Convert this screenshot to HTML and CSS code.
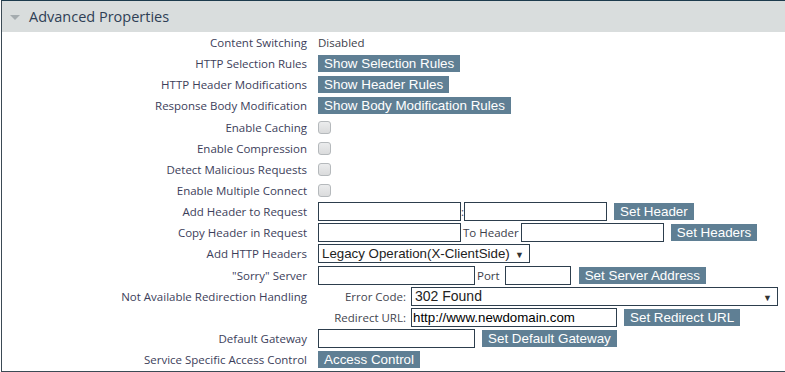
FILE: index.html
```html
<!DOCTYPE html>
<html lang="en">
<head>
    <meta charset="UTF-8">
    <meta name="viewport" content="width=device-width, initial-scale=1.0">
    <title>Advanced Properties</title>
    <link rel="stylesheet" href="styles.css">
</head>
<body>
    <div class="panel">
        <div class="panel-head">
            <span class="caret"></span>
            <span class="panel-title">Advanced Properties</span>
        </div>
        <div class="props">
            <div class="label">Content Switching</div>
            <div class="value"><span class="plain">Disabled</span></div>

            <div class="label">HTTP Selection Rules</div>
            <div class="value"><button class="btn">Show Selection Rules</button></div>

            <div class="label">HTTP Header Modifications</div>
            <div class="value"><button class="btn">Show Header Rules</button></div>

            <div class="label">Response Body Modification</div>
            <div class="value"><button class="btn">Show Body Modification Rules</button></div>

            <div class="label">Enable Caching</div>
            <div class="value"><input type="checkbox" class="check"></div>

            <div class="label">Enable Compression</div>
            <div class="value"><input type="checkbox" class="check"></div>

            <div class="label">Detect Malicious Requests</div>
            <div class="value"><input type="checkbox" class="check"></div>

            <div class="label">Enable Multiple Connect</div>
            <div class="value"><input type="checkbox" class="check"></div>

            <div class="label">Add Header to Request</div>
            <div class="value">
                <input type="text" class="field w143">
                <span class="colon">:</span>
                <input type="text" class="field w143">
                <button class="btn gap7">Set Header</button>
            </div>

            <div class="label">Copy Header in Request</div>
            <div class="value">
                <input type="text" class="field w143">
                <span class="plain mid">To Header</span>
                <input type="text" class="field w143">
                <button class="btn gap7">Set Headers</button>
            </div>

            <div class="label">Add HTTP Headers</div>
            <div class="value">
                <span class="select-wrap w212">
                    <select class="select">
                        <option>Legacy Operation(X-ClientSide)</option>
                    </select>
                </span>
            </div>

            <div class="label">"Sorry" Server</div>
            <div class="value">
                <input type="text" class="field w157">
                <span class="plain port">Port</span>
                <input type="text" class="field w66">
                <button class="btn gap8">Set Server Address</button>
            </div>

            <div class="label">Not Available Redirection Handling</div>
            <div class="value span2">
                <div class="sub">
                    <div class="sub-label">Error Code:</div>
                    <div class="value">
                        <span class="select-wrap w367">
                            <select class="select big">
                                <option>302 Found</option>
                            </select>
                        </span>
                    </div>
                    <div class="sub-label">Redirect URL:</div>
                    <div class="value">
                        <input type="text" class="field w206" value="http://www.newdomain.com">
                        <button class="btn gap7">Set Redirect URL</button>
                    </div>
                </div>
            </div>
            <div class="label"></div>

            <div class="label">Default Gateway</div>
            <div class="value">
                <input type="text" class="field w157">
                <button class="btn gap7">Set Default Gateway</button>
            </div>

            <div class="label">Service Specific Access Control</div>
            <div class="value"><button class="btn">Access Control</button></div>
        </div>
    </div>
</body>
</html>
```

FILE: styles.css
```css
html, body {
    margin: 0;
    background: #ffffff;
    overflow: hidden;
}
body {
    font-family: 'Open Sans', 'Noto Sans', sans-serif;
    font-size: 11.5px;
    color: #3c3e5a;
}
.panel {
    margin-left: 1px;
    width: 800px;
    border-top: 1px solid #1d3b4d;
    border-left: 1px solid #3b4a55;
    border-bottom: 1px solid #3b4a55;
    padding-bottom: 1px;
}
.panel-head {
    height: 31px;
    background: #d9dddd;
    display: flex;
    align-items: center;
}
.caret {
    width: 0;
    height: 0;
    border-left: 5px solid transparent;
    border-right: 5px solid transparent;
    border-top: 5px solid #a5acaf;
    margin-left: 8px;
    margin-right: 9px;
    margin-top: 2px;
}
.panel-title {
    font-size: 14.5px;
    color: #2f3f55;
}
.props {
    display: grid;
    grid-template-columns: 305px 1fr;
    grid-auto-rows: 21.15px;
    column-gap: 11px;
}
.label {
    text-align: right;
    align-self: center;
    white-space: nowrap;
}
.value {
    display: flex;
    align-items: center;
    white-space: nowrap;
}
.span2 {
    grid-row: span 2;
    align-items: stretch;
}
.sub {
    display: grid;
    grid-template-columns: 88px 1fr;
    grid-auto-rows: 21.15px;
    column-gap: 5px;
    width: 100%;
}
.sub-label {
    text-align: right;
    align-self: center;
    color: #444650;
}
.plain {
    color: #3c3e4a;
}
.mid {
    margin: 0 2px 0 2px;
}
.port {
    margin: 0 5px 0 2px;
}
.colon {
    width: 3px;
    text-align: center;
}
.btn {
    background: #5f7f94;
    color: #ffffff;
    border: none;
    border-radius: 0;
    font-family: 'Liberation Sans', Arial, sans-serif;
    font-size: 13.4px;
    height: 17px;
    line-height: 17px;
    padding: 0 6px;
    margin: 0;
}
.gap7 {
    margin-left: 7px;
}
.gap8 {
    margin-left: 8px;
}
.check {
    appearance: none;
    width: 13px;
    height: 13px;
    margin: 0;
    border: 1px solid #b5b9bc;
    border-radius: 3px;
    background: linear-gradient(#ebeced, #dadbdc);
}
.field {
    box-sizing: border-box;
    height: 19px;
    margin: 0;
    border: 1px solid #2d3e4d;
    border-radius: 0;
    padding: 0 1px;
    font-family: 'Liberation Sans', Arial, sans-serif;
    font-size: 13.3px;
    color: #000000;
    background: #ffffff;
}
.w143 { width: 143px; }
.w157 { width: 157px; }
.w66 { width: 66px; }
.w206 { width: 206px; }
.select-wrap {
    position: relative;
    display: inline-block;
    height: 19px;
}
.w212 { width: 212px; }
.w367 { width: 367px; }
.select {
    appearance: none;
    box-sizing: border-box;
    width: 100%;
    height: 19px;
    margin: 0;
    border: 1px solid #2d3e4d;
    border-radius: 0;
    background: #ffffff;
    padding: 0 0 0 3px;
    font-family: 'Liberation Sans', Arial, sans-serif;
    font-size: 13.3px;
    color: #222222;
}
.big {
    font-size: 14px;
}
.select-wrap::after {
    content: "\25BC";
    position: absolute;
    right: 6px;
    top: 4px;
    font-size: 9px;
    color: #333333;
    pointer-events: none;
}
```
